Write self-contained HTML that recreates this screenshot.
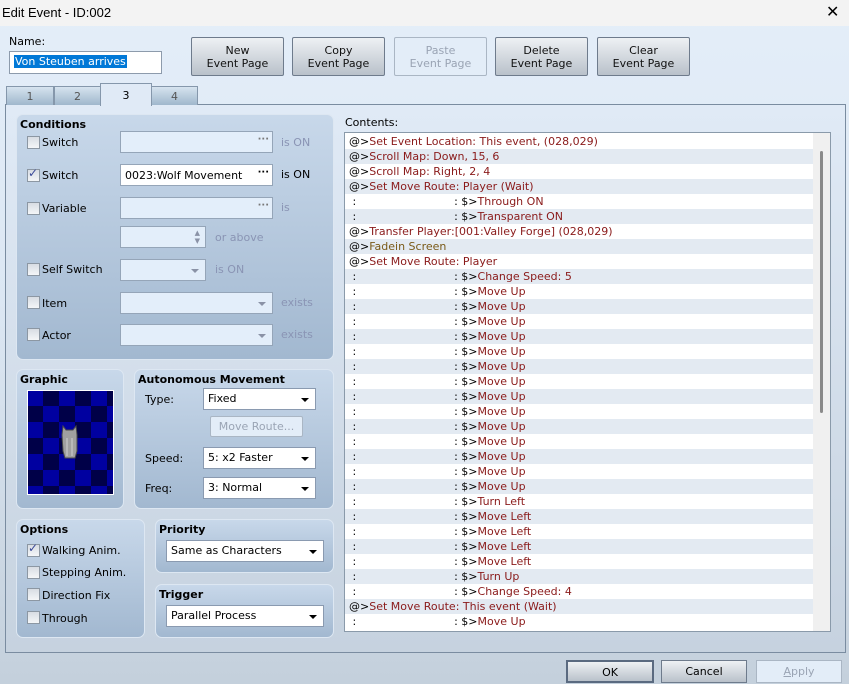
<!DOCTYPE html>
<html><head><meta charset="utf-8"><style>
*{box-sizing:border-box;margin:0;padding:0}
body{width:849px;height:684px;overflow:hidden;font-family:"DejaVu Sans","Liberation Sans",sans-serif;font-size:11px;color:#000;background:linear-gradient(#e4eef9 0,#dce7f3 300px,#c4d0dc 684px);position:relative}
.a{position:absolute}
.title{left:0;top:0;width:849px;height:26px;background:#f3f3f3;font-family:"Liberation Sans",sans-serif;font-size:13px;line-height:26px;padding-left:2px}
.btn{position:absolute;border:1px solid #6e7b8c;border-radius:2px;background:linear-gradient(#eef1f4,#b9c1ca);text-align:center;font-size:11px;line-height:13px;color:#111}
.btn.dis{background:#e3edf8;border-color:#aab6c4;color:#9aa4b4}
.tab{position:absolute;top:86px;height:19px;border:1px solid #8597ab;border-bottom:none;background:linear-gradient(#d6e3ef,#9fb7cc);text-align:center;line-height:19px;color:#555}
.pane{left:5px;top:104px;width:841px;height:549px;border:1px solid #7a8ca0;background:linear-gradient(#e0eaf6,#c6d2df)}
.grp{position:absolute;border-radius:7px;border:1px solid #dde7f2;background:linear-gradient(#c8d8ea,#a2b8d0)}
.grp b{position:absolute;left:3px;top:3px;font-size:11px}
.cb{position:absolute;width:13px;height:13px;border:1px solid #8c97a3;background:linear-gradient(#d8dde3,#f4f6f8)}
.lbl{position:absolute;font-size:11px}
.in{position:absolute;height:22px;border:1px solid #95a5b8;background:#e3eefa}
.in.w{background:#fff}
.dim{position:absolute;color:#8a94b4}
.dots{position:absolute;right:3px;top:2px;font-weight:bold;color:#777;font-size:10px}
.arr{position:absolute;right:6px;top:9px;width:0;height:0;border-left:4px solid transparent;border-right:4px solid transparent;border-top:4px solid #8a92a6}
.sel{position:absolute;height:22px;border:1px solid #8a9ab0;background:#fff;padding-left:4px;line-height:20px}
.sel .arr{border-top-color:#000}
.list{left:344px;top:132px;width:487px;height:500px;border:1px solid #8a9aaa;background:#fff;overflow:hidden}
.row{height:15px;line-height:15px;padding-left:4px;white-space:pre;font-size:11px;color:#8a1a1a;width:468px}
.row:nth-child(even){background:#e3eaf2}
.row i{font-style:normal;color:#000}
.ok{position:absolute;border:1px solid #6e7b8c;background:linear-gradient(#eef1f4,#b9c1ca);text-align:center;line-height:21px;font-size:11px}
</style></head><body>
<div class="a title">Edit Event - ID:002</div>
<div class="a" style="left:826px;top:2px;font-size:16px;font-family:'Liberation Sans',sans-serif">✕</div>

<div class="a" style="left:9px;top:35px">Name:</div>
<div class="a" style="left:9px;top:51px;width:153px;height:23px;border:1px solid #8d9bac;background:#fff"><span style="position:absolute;left:4px;top:3px;background:#0078d7;color:#fff;padding:0 1px">Von Steuben arrives</span></div>

<div class="btn" style="left:191px;top:37px;width:93px;height:39px;padding-top:6px">New<br>Event Page</div>
<div class="btn" style="left:292px;top:37px;width:93px;height:39px;padding-top:6px">Copy<br>Event Page</div>
<div class="btn dis" style="left:394px;top:37px;width:93px;height:39px;padding-top:6px">Paste<br>Event Page</div>
<div class="btn" style="left:495px;top:37px;width:93px;height:39px;padding-top:6px">Delete<br>Event Page</div>
<div class="btn" style="left:597px;top:37px;width:93px;height:39px;padding-top:6px">Clear<br>Event Page</div>

<div class="a pane"></div>
<div class="tab" style="left:6px;width:48px">1</div>
<div class="tab" style="left:54px;width:47px">2</div>
<div class="tab" style="left:151px;width:47px">4</div>
<div class="tab" style="left:100px;width:52px;top:83px;height:23px;background:#e0eaf6;color:#000;line-height:24px">3</div>

<!-- Conditions -->
<div class="grp" style="left:16px;top:114px;width:318px;height:246px"><b>Conditions</b></div>
<div class="cb" style="left:27px;top:136px"></div><div class="lbl" style="left:42px;top:136px">Switch</div>
<div class="in" style="left:120px;top:131px;width:153px"><span class="dots">···</span></div><div class="dim" style="left:281px;top:136px">is ON</div>
<div class="cb" style="left:27px;top:169px"></div><div class="lbl" style="left:28px;top:166px;color:#3b4a9a;font-size:12px">✓</div><div class="lbl" style="left:42px;top:169px">Switch</div>
<div class="in w" style="left:120px;top:164px;width:153px;padding:4px 0 0 4px">0023:Wolf Movement<span class="dots" style="color:#000">···</span></div><div class="lbl" style="left:281px;top:168px">is ON</div>
<div class="cb" style="left:27px;top:202px"></div><div class="lbl" style="left:42px;top:202px">Variable</div>
<div class="in" style="left:120px;top:197px;width:153px"><span class="dots">···</span></div><div class="dim" style="left:281px;top:201px">is</div>
<div class="in" style="left:120px;top:226px;width:86px"><span class="a" style="right:5px;top:2px;font-size:7px;color:#8a92a6;line-height:8px">▲<br>▼</span></div><div class="dim" style="left:215px;top:231px">or above</div>
<div class="cb" style="left:27px;top:263px"></div><div class="lbl" style="left:42px;top:263px">Self Switch</div>
<div class="in" style="left:120px;top:259px;width:86px"><span class="arr"></span></div><div class="dim" style="left:215px;top:263px">is ON</div>
<div class="cb" style="left:27px;top:296px"></div><div class="lbl" style="left:42px;top:297px">Item</div>
<div class="in" style="left:120px;top:292px;width:153px"><span class="arr"></span></div><div class="dim" style="left:281px;top:296px">exists</div>
<div class="cb" style="left:27px;top:328px"></div><div class="lbl" style="left:42px;top:329px">Actor</div>
<div class="in" style="left:120px;top:324px;width:153px"><span class="arr"></span></div><div class="dim" style="left:281px;top:328px">exists</div>

<!-- Graphic -->
<div class="grp" style="left:16px;top:369px;width:108px;height:140px"><b>Graphic</b></div>
<div class="a" style="left:27px;top:390px;width:87px;height:105px;border:1px solid #fff;background:repeating-conic-gradient(#000048 0 25%,#0000a0 0 50%) -1px -1px/32px 32px"></div>
<svg class="a" style="left:61px;top:425px" width="18" height="34"><path d="M2 1 L5 5 L12 5 L15 1 L16 10 L16 26 L14 33 L4 33 L2 26 L1 10 Z" fill="#a0a0a0" stroke="#4a4a4a" stroke-width="1"/><path d="M6 13 L6 31 M11 13 L11 31" stroke="#d0d0d0"/></svg>

<!-- Autonomous -->
<div class="grp" style="left:134px;top:369px;width:200px;height:140px"><b>Autonomous Movement</b></div>
<div class="lbl" style="left:145px;top:393px">Type:</div>
<div class="sel" style="left:203px;top:388px;width:113px">Fixed<span class="arr"></span></div>
<div class="btn dis" style="left:210px;top:416px;width:93px;height:21px;line-height:19px;background:#e3edf8">Move Route...</div>
<div class="lbl" style="left:145px;top:452px">Speed:</div>
<div class="sel" style="left:203px;top:447px;width:113px">5: x2 Faster<span class="arr"></span></div>
<div class="lbl" style="left:145px;top:482px">Freq:</div>
<div class="sel" style="left:203px;top:477px;width:113px">3: Normal<span class="arr"></span></div>

<!-- Options -->
<div class="grp" style="left:16px;top:519px;width:129px;height:119px"><b>Options</b></div>
<div class="cb" style="left:27px;top:544px"></div><div class="lbl" style="left:28px;top:541px;color:#3b4a9a;font-size:12px">✓</div><div class="lbl" style="left:42px;top:544px">Walking Anim.</div>
<div class="cb" style="left:27px;top:566px"></div><div class="lbl" style="left:42px;top:566px">Stepping Anim.</div>
<div class="cb" style="left:27px;top:588px"></div><div class="lbl" style="left:42px;top:589px">Direction Fix</div>
<div class="cb" style="left:27px;top:611px"></div><div class="lbl" style="left:42px;top:612px">Through</div>

<!-- Priority / Trigger -->
<div class="grp" style="left:155px;top:519px;width:179px;height:54px"><b>Priority</b></div>
<div class="sel" style="left:166px;top:540px;width:158px">Same as Characters<span class="arr"></span></div>
<div class="grp" style="left:155px;top:584px;width:179px;height:54px"><b>Trigger</b></div>
<div class="sel" style="left:166px;top:605px;width:158px">Parallel Process<span class="arr"></span></div>

<!-- Contents -->
<div class="a" style="left:345px;top:116px">Contents:</div>
<div class="a list"><div style="padding-top:1px">
<div class="row"><i>@&gt;</i>Set Event Location: This event, (028,029)</div>
<div class="row"><i>@&gt;</i>Scroll Map: Down, 15, 6</div>
<div class="row"><i>@&gt;</i>Scroll Map: Right, 2, 4</div>
<div class="row"><i>@&gt;</i>Set Move Route: Player (Wait)</div>
<div class="row"><i> :                            : $&gt;</i>Through ON</div>
<div class="row"><i> :                            : $&gt;</i>Transparent ON</div>
<div class="row"><i>@&gt;</i>Transfer Player:[001:Valley Forge] (028,029)</div>
<div class="row"><i>@&gt;</i><span style="color:#7a5a18">Fadein Screen</span></div>
<div class="row"><i>@&gt;</i>Set Move Route: Player</div>
<div class="row"><i> :                            : $&gt;</i>Change Speed: 5</div>
<div class="row"><i> :                            : $&gt;</i>Move Up</div>
<div class="row"><i> :                            : $&gt;</i>Move Up</div>
<div class="row"><i> :                            : $&gt;</i>Move Up</div>
<div class="row"><i> :                            : $&gt;</i>Move Up</div>
<div class="row"><i> :                            : $&gt;</i>Move Up</div>
<div class="row"><i> :                            : $&gt;</i>Move Up</div>
<div class="row"><i> :                            : $&gt;</i>Move Up</div>
<div class="row"><i> :                            : $&gt;</i>Move Up</div>
<div class="row"><i> :                            : $&gt;</i>Move Up</div>
<div class="row"><i> :                            : $&gt;</i>Move Up</div>
<div class="row"><i> :                            : $&gt;</i>Move Up</div>
<div class="row"><i> :                            : $&gt;</i>Move Up</div>
<div class="row"><i> :                            : $&gt;</i>Move Up</div>
<div class="row"><i> :                            : $&gt;</i>Move Up</div>
<div class="row"><i> :                            : $&gt;</i>Turn Left</div>
<div class="row"><i> :                            : $&gt;</i>Move Left</div>
<div class="row"><i> :                            : $&gt;</i>Move Left</div>
<div class="row"><i> :                            : $&gt;</i>Move Left</div>
<div class="row"><i> :                            : $&gt;</i>Move Left</div>
<div class="row"><i> :                            : $&gt;</i>Turn Up</div>
<div class="row"><i> :                            : $&gt;</i>Change Speed: 4</div>
<div class="row"><i>@&gt;</i>Set Move Route: This event (Wait)</div>
<div class="row"><i> :                            : $&gt;</i>Move Up</div>
</div>
<div class="a" style="left:468px;top:0;width:17px;height:498px;background:#f0f0f0"></div>
<div class="a" style="left:475px;top:18px;width:3px;height:262px;background:#8a8a8a;border-radius:2px"></div>
</div>

<div class="ok" style="left:566px;top:660px;width:88px;height:23px;border:2px solid #5a6a80">OK</div>
<div class="ok" style="left:661px;top:660px;width:86px;height:23px">Cancel</div>
<div class="ok" style="left:756px;top:660px;width:86px;height:23px;background:#e3edf8;border-color:#aab6c4;color:#9aa4b4"><u>A</u>pply</div>
</body></html>
